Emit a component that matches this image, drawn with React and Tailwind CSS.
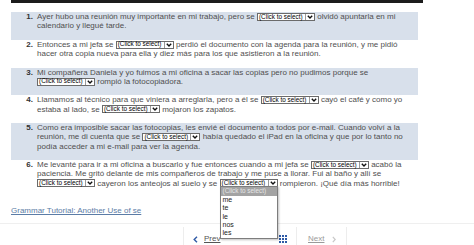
import React from "react";

const Chevron = () => (
  <svg width="6" height="4" viewBox="0 0 6 4" className="block">
    <polyline points="0.8,0.8 3,3 5.2,0.8" fill="none" stroke="#111" strokeWidth="1.4" />
  </svg>
);

const options = ["me", "te", "le", "nos", "les"];

const Sel = ({ open }) => (
  <span className="relative inline-flex h-[8px] w-[58px] items-stretch border border-[#6b6b6b] bg-white align-middle">
    <span className="flex flex-1 items-center pl-[1px] text-[6.4px] leading-none text-black">
      (Click to select)
    </span>
    <span className="flex w-[9px] items-center justify-center border-l border-[#9a9a9a]">
      <Chevron />
    </span>
    {open && (
      <span className="absolute left-[-1px] top-full z-10 block w-[58px] border border-[#7d7d7d] bg-white shadow-[1px_1px_2px_rgba(0,0,0,0.25)]">
        <span className="block h-[8.4px] bg-[#a3a3a3] pl-[2px] text-[6.4px] leading-[8.4px] text-[#e6e6e6]">
          (Click to select)
        </span>
        {options.map((o) => (
          <span key={o} className="block h-[8.4px] pl-[2px] text-[7px] leading-[8.4px] text-[#222]">
            {o}
          </span>
        ))}
      </span>
    )}
  </span>
);

const rows = [
  [
    <>Ayer hubo una reunión muy importante en mi trabajo, pero se <Sel /> olvidó apuntarla en mi</>,
    <>calendario y llegué tarde.</>,
  ],
  [
    <>Entonces a mi jefa se <Sel /> perdió el documento con la agenda para la reunión, y me pidió</>,
    <>hacer otra copia nueva para ella y diez más para los que asistieron a la reunión.</>,
  ],
  [
    <>Mi compañera Daniela y yo fuimos a mi oficina a sacar las copias pero no pudimos porque se</>,
    <><Sel /> rompió la fotocopiadora.</>,
  ],
  [
    <>Llamamos al técnico para que viniera a arreglarla, pero a él se <Sel /> cayó el café y como yo</>,
    <>estaba al lado, se <Sel /> mojaron los zapatos.</>,
  ],
  [
    <>Como era imposible sacar las fotocopias, les envié el documento a todos por e-mail. Cuando volví a la</>,
    <>reunión, me di cuenta que se <Sel /> había quedado el iPad en la oficina y que por lo tanto no</>,
    <>podía acceder a mi e-mail para ver la agenda.</>,
  ],
  [
    <>Me levanté para ir a mi oficina a buscarlo y fue entonces cuando a mi jefa se <Sel /> acabó la</>,
    <>paciencia. Me gritó delante de mis compañeros de trabajo y me puse a llorar. Fui al baño y allí se</>,
    <><Sel /> cayeron los anteojos al suelo y se <Sel open /> rompieron. ¡Qué día más horrible!</>,
  ],
];

const GridIcon = () => (
  <svg width="8" height="8" viewBox="0 0 8 8">
    {[0, 3, 6].map((y) =>
      [0, 3, 6].map((x) => <rect key={x + "-" + y} x={x} y={y} width="2" height="2" fill="#2f5aa6" />)
    )}
  </svg>
);

export default function App() {
  return (
    <div className="h-[245px] w-[474px] overflow-hidden bg-white font-['Liberation_Sans',Arial,sans-serif]">
      <div className="ml-[11px] w-[412px]">
        <div className="h-[3px] bg-[#1c1c1c]" />
        <ol className="mt-[9px] w-[407px]">
          {rows.map((lines, i) => (
            <li
              key={i}
              className={
                "flex pb-[9.25px] text-[8px] leading-[9.25px] text-[#4f4f4f] " +
                (i % 2 === 0 ? "bg-[#d8e0eb]" : "")
              }
            >
              <span className="w-[26px] shrink-0 pr-[4px] text-right font-bold text-[#333]">{i + 1}.</span>
              <div>
                {lines.map((l, j) => (
                  <div key={j} className="h-[9.25px] whitespace-nowrap">
                    {l}
                  </div>
                ))}
              </div>
            </li>
          ))}
        </ol>
        <a className="mt-[8.7px] block text-[8px] leading-[9.25px] text-[#5b7ca6] underline">
          Grammar Tutorial: Another Use of se
        </a>
      </div>
      <div className="mt-[8px] border-t border-[#efefef]">
        <div className="ml-[183px] flex h-[28px] items-stretch pt-[3px]">
          <div className="flex w-[87px] items-center gap-[6px] border-l border-[#ededed] pl-[9px] text-[8px]">
            <svg width="5" height="7" viewBox="0 0 5 7">
              <polyline points="4,0.8 1.2,3.5 4,6.2" fill="none" stroke="#2f5aa6" strokeWidth="1.4" />
            </svg>
            <span className="text-[#555] underline">Prev</span>
          </div>
          <div className="flex w-[26px] items-center justify-center">
            <GridIcon />
          </div>
          <div className="flex w-[51px] items-center gap-[8px] border-x border-[#ededed] pl-[11px] text-[8px]">
            <span className="text-[#9a9a9a] underline">Next</span>
            <svg width="4" height="7" viewBox="0 0 4 7">
              <polyline points="0.8,0.8 3.2,3.5 0.8,6.2" fill="none" stroke="#c8c8c8" strokeWidth="1.2" />
            </svg>
          </div>
        </div>
      </div>
    </div>
  );
}
